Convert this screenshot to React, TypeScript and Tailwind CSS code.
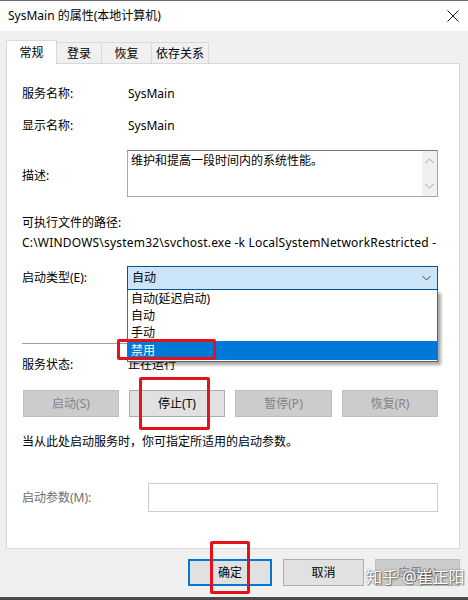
import React from "react";

const F = { fontFamily: '"Noto Sans", "Noto Sans CJK SC", sans-serif' };

function RedBox({ className }: { className: string }) {
  return (
    <div
      className={
        "absolute border-[3px] border-[#e3131b] rounded-[2px] pointer-events-none z-30 " +
        className
      }
    />
  );
}

function Btn({
  label,
  kind,
  w,
}: {
  label: string;
  kind: "normal" | "disabled" | "default";
  w: string;
}) {
  const cls =
    kind === "disabled"
      ? "bg-[#cccccc] border border-[#bfbfbf] text-[#838383]"
      : kind === "default"
      ? "bg-[#e1e1e1] border-2 border-[#0078d7] text-black"
      : "bg-[#e1e1e1] border border-[#adadad] text-black";
  return (
    <div
      className={`${w} h-[27px] flex items-center justify-center text-[12px] ${cls}`}
    >
      {label}
    </div>
  );
}

export default function App() {
  return (
    <div
      className="relative w-[468px] h-[600px] overflow-hidden bg-[#f0f0f0] text-[12px] text-black leading-[16px]"
      style={F}
    >
      {/* title bar */}
      <div className="h-[31px] bg-white border-t border-[#6e6e6e] flex items-center justify-between pl-[8px] pr-[8px]">
        <span className="text-[12px] text-black">SysMain 的属性(本地计算机)</span>
        <svg width="12" height="12" viewBox="0 0 12 12" className="mr-[1px]">
          <path d="M0.5 0.5 L11.5 11.5 M11.5 0.5 L0.5 11.5" stroke="#111" strokeWidth="1" />
        </svg>
      </div>

      {/* tabs */}
      <div className="pl-[6px] pt-[9px] flex items-end h-[32px]">
        <div className="relative z-10 w-[51px] h-[24px] -mb-px bg-white border border-b-0 border-[#d9d9d9] flex items-start justify-center pt-[4px]">
          常规
        </div>
        <div className="w-[45px] h-[21px] bg-[#f0f0f0] border border-l-0 border-b-0 border-[#d9d9d9] flex items-start justify-center pt-[3px]">
          登录
        </div>
        <div className="w-[50px] h-[21px] bg-[#f0f0f0] border border-l-0 border-b-0 border-[#d9d9d9] flex items-start justify-center pt-[3px]">
          恢复
        </div>
        <div className="w-[57px] h-[21px] bg-[#f0f0f0] border border-l-0 border-b-0 border-[#d9d9d9] flex items-start justify-center pt-[3px]">
          依存关系
        </div>
      </div>

      {/* panel */}
      <div className="ml-[6px] w-[454px] h-[486px] bg-white border border-[#d9d9d9] pl-[15px] flex flex-col relative">
        <div className="mt-[22px] h-[16px] flex items-center">
          <div className="w-[106px]">服务名称:</div>
          <div>SysMain</div>
        </div>
        <div className="mt-[16px] h-[16px] flex items-center">
          <div className="w-[106px]">显示名称:</div>
          <div>SysMain</div>
        </div>
        <div className="mt-[16px] h-[47px] flex items-center">
          <div className="w-[105px] pt-[4px]">描述:</div>
          <div className="w-[311px] h-[47px] border border-[#a6a6a6] border-t-[#7a7a7a] flex">
            <div className="flex-1 pl-[3px] pt-[2px]">维护和提高一段时间内的系统性能。</div>
            <div className="w-[15px] h-full bg-[#f0f0f0] flex flex-col items-center justify-between py-[7px]">
              <svg width="9" height="6" viewBox="0 0 9 6">
                <path d="M0.5 5 L4.5 1 L8.5 5" stroke="#a3a3a3" fill="none" strokeWidth="1" />
              </svg>
              <svg width="9" height="6" viewBox="0 0 9 6">
                <path d="M0.5 1 L4.5 5 L8.5 1" stroke="#a3a3a3" fill="none" strokeWidth="1" />
              </svg>
            </div>
          </div>
        </div>
        <div className="mt-[18px] h-[16px] flex items-center">可执行文件的路径:</div>
        <div className="mt-[4px] h-[16px] flex items-center whitespace-nowrap tracking-[0.2px]">
          C:\WINDOWS\system32\svchost.exe -k LocalSystemNetworkRestricted -
        </div>
        <div className="mt-[15px] h-[24px] flex items-center relative">
          <div className="w-[105px]">启动类型(E):</div>
          <div className="w-[311px] h-[24px] bg-[#cce4f7] border border-[#005499] flex items-center justify-between pl-[4px] pr-[6px]">
            <span>自动</span>
            <svg width="9" height="6" viewBox="0 0 9 6">
              <path d="M0.5 1 L4.5 5 L8.5 1" stroke="#444" fill="none" strokeWidth="1" />
            </svg>
          </div>
          {/* dropdown list */}
          <div className="absolute left-[105px] top-[24px] w-[311px] h-[72px] bg-white border border-[#646464] border-t-0 z-20 shadow-[3px_3px_3px_rgba(0,0,0,0.35)] flex flex-col">
            <div className="h-[17px] pl-[3px] flex items-center">自动(延迟启动)</div>
            <div className="h-[17px] pl-[3px] flex items-center">自动</div>
            <div className="h-[17px] pl-[3px] flex items-center">手动</div>
            <div className="h-[19px] pl-[3px] flex items-center bg-[#0078d7] text-white">禁用</div>
          </div>
        </div>
        <div className="mt-[53px] h-px w-[416px] bg-[#a0a0a0]" />
        <div className="mt-[13px] h-[16px] flex items-center">
          <div className="w-[106px]">服务状态:</div>
          <div>正在运行</div>
        </div>
        <div className="mt-[17px] flex gap-[10px] ml-px">
          <Btn label="启动(S)" kind="disabled" w="w-[96px]" />
          <Btn label="停止(T)" kind="normal" w="w-[96px]" />
          <Btn label="暂停(P)" kind="disabled" w="w-[97px]" />
          <Btn label="恢复(R)" kind="disabled" w="w-[96px]" />
        </div>
        <div className="mt-[17px] h-[16px] flex items-center">
          当从此处启动服务时，你可指定所适用的启动参数。
        </div>
        <div className="mt-[33px] h-[29px] flex items-center">
          <div className="w-[126px] text-[#6d6d6d]">启动参数(M):</div>
          <div className="w-[290px] h-[29px] border border-[#cccccc] bg-white" />
        </div>
      </div>

      {/* bottom buttons */}
      <div className="mt-[10px] flex pl-[188px] gap-[11px]">
        <Btn label="确定" kind="default" w="w-[84px]" />
        <Btn label="取消" kind="normal" w="w-[81px]" />
        <Btn label="应用(A)" kind="disabled" w="w-[85px]" />
      </div>

      {/* bottom strip */}
      <div className="absolute left-0 bottom-0 w-full h-[3px] bg-[#4a4a4a]" />

      {/* watermark */}
      <div
        className="absolute left-[366px] top-[566px] text-[16px] leading-[22px] text-white z-30 whitespace-nowrap"
        style={{ textShadow: "0 0 2px rgba(0,0,0,0.6), 1px 1px 1px rgba(0,0,0,0.4)" }}
      >
        知乎 @崔正阳
      </div>

      {/* red highlight boxes */}
      <RedBox className="left-[117px] top-[339px] w-[99px] h-[21px]" />
      <RedBox className="left-[139px] top-[377px] w-[71px] h-[53px]" />
      <RedBox className="left-[210px] top-[541px] w-[40px] h-[53px]" />
    </div>
  );
}
